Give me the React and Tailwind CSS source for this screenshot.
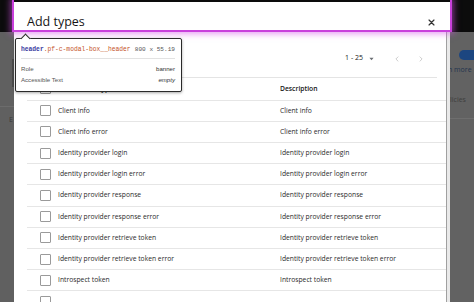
const rows = [
  "Client info",
  "Client info error",
  "Identity provider login",
  "Identity provider login error",
  "Identity provider response",
  "Identity provider response error",
  "Identity provider retrieve token",
  "Identity provider retrieve token error",
  "Introspect token",
];

function Checkbox() {
  return <span className="block w-[11px] h-[11px] rounded-[1px] border border-[#9a9a9a] bg-white" />;
}

export default function App() {
  return (
    <div className="relative w-[474px] h-[302px] overflow-hidden flex bg-[#5e5e5e] font-['Open_Sans',sans-serif] text-[#1f1f1f]">
      {/* left page strip under overlay */}
      <div className="w-[14px] shrink-0 flex flex-col">
        <div className="h-[32px] bg-[#0c0c0c]" />
        <div className="flex-1 bg-[#606060] flex flex-col">
          <div className="h-[28px] mt-[27px] w-[2px] ml-[12px] bg-[#4a4a4a]" />
          <div className="mt-[19px] h-px bg-[#6c6c6c]" />
          <div className="mt-[8px] pl-[9px] text-[7px] leading-[9px] text-[#3a3a3a]">E</div>
        </div>
      </div>

      {/* modal */}
      <div className="w-[436px] shrink-0 flex flex-col">
        <header className="relative z-10 -mx-[2px] h-[33px] border-x-2 border-b-2 border-[#c940dc] bg-white shadow-[0_0_6px_2px_rgba(214,80,235,0.55)]">
          <div className="h-[2px] bg-[#0c0c0c]" />
          <div className="flex items-start justify-between pl-[13px] pr-[15px] pt-[12px]">
            <h1 className="text-[12.5px] leading-[16px] font-medium text-[#151515]">Add types</h1>
            <svg width="7" height="7" viewBox="0 0 10 10" className="mt-[5px]">
              <path d="M1.5 1.5 L8.5 8.5 M8.5 1.5 L1.5 8.5" stroke="#333" strokeWidth="1.8" strokeLinecap="round" />
            </svg>
          </div>
        </header>

        <div className="flex-1 flex">
          <div className="flex-1 bg-white flex flex-col">
            {/* toolbar */}
            <div className="ml-[16px] mr-[9px] h-[46px] border-b border-[#e4e4e4] flex items-center justify-end pt-[8px] pr-[4px]">
              <span className="text-[7px] font-medium text-[#222]">1 - 25</span>
              <svg width="5" height="4" viewBox="0 0 6 4" className="ml-[6px]">
                <path d="M0.5 0.5 L5.5 0.5 L3 3.5 Z" fill="#6a6e73" />
              </svg>
              <div className="ml-[11px] w-[24px] flex justify-center">
                <svg width="4" height="6" viewBox="0 0 4 6">
                  <path d="M3.3 0.6 L0.9 3 L3.3 5.4" stroke="#c8c8c8" strokeWidth="0.9" fill="none" />
                </svg>
              </div>
              <div className="w-[24px] flex justify-center">
                <svg width="4" height="6" viewBox="0 0 4 6">
                  <path d="M0.7 0.6 L3.1 3 L0.7 5.4" stroke="#c8c8c8" strokeWidth="0.9" fill="none" />
                </svg>
              </div>
            </div>

            {/* table */}
            <div className="pl-[13px] text-[6.75px] text-[#2a2a2a]">
              <div className="h-[22.7px] border-b border-[#e6e6e6] grid grid-cols-[31px_222px_1fr] items-center font-semibold text-[#151515]">
                <div className="pl-[13px]"><Checkbox /></div>
                <span>Event saved type</span>
                <span>Description</span>
              </div>
              {rows.map((r) => (
                <div key={r} className="h-[21.2px] border-b border-[#e6e6e6] grid grid-cols-[31px_222px_1fr] items-center">
                  <div className="pl-[13px]"><Checkbox /></div>
                  <span>{r}</span>
                  <span>{r}</span>
                </div>
              ))}
              <div className="h-[21.2px] grid grid-cols-[31px_222px_1fr] items-center">
                <div className="pl-[13px]"><Checkbox /></div>
              </div>
            </div>
          </div>
          <div className="w-[4px] border-l border-[#a0a0a0] bg-[#e9e9e9]" />
        </div>
      </div>

      {/* right page strip under overlay */}
      <div className="flex-1 min-w-0 overflow-hidden flex flex-col">
        <div className="h-[32px] bg-[#0c0c0c]" />
        <div className="flex-1 bg-[#626262] flex flex-col items-start">
          <div className="mt-[18px] ml-[9px] w-[22px] h-[10px] shrink-0 rounded-full bg-[#1c4680]" />
          <span className="mt-[5px] -ml-[2px] text-[7px] leading-[9px] whitespace-nowrap text-[#23344e]">n more</span>
          <span className="mt-[21px] text-[7px] leading-[9px] whitespace-nowrap text-[#3e3e3e]">licies</span>
          <div className="mt-[14px] h-px w-full bg-[#6e6e6e]" />
        </div>
      </div>

      {/* devtools inspect tooltip */}
      <div className="absolute left-[15px] top-[38px] w-[167px] h-[54px] z-20 bg-white border border-[#2a2a2a] rounded-[2px] shadow-[0_1px_3px_rgba(0,0,0,0.35)] pl-[5px] pr-[6px] font-['Liberation_Sans',sans-serif] whitespace-nowrap">
        <div className="absolute -top-[4px] left-[6px] w-[7px] h-[7px] rotate-45 bg-white border-l border-t border-[#2a2a2a]" />
        <div className="mt-[7px] flex justify-between items-baseline font-['Liberation_Mono',monospace] text-[6.3px] leading-[8px]">
          <span>
            <span className="text-[#3a3aa0] font-bold">header</span>
            <span className="text-[#c4521f]">.pf-c-modal-box__header</span>
          </span>
          <span className="text-[#555] text-[6.1px]">800 x 55.19</span>
        </div>
        <div className="mt-[4px] h-px bg-[#e2e2e2]" />
        <div className="mt-[6px] flex justify-between text-[6.1px] leading-[8px] text-[#555]">
          <span>Role</span>
          <span className="text-[#333]">banner</span>
        </div>
        <div className="mt-[3px] flex justify-between text-[6.1px] leading-[8px] text-[#555]">
          <span>Accessible Text</span>
          <span className="italic text-[#333]">empty</span>
        </div>
      </div>
    </div>
  );
}
